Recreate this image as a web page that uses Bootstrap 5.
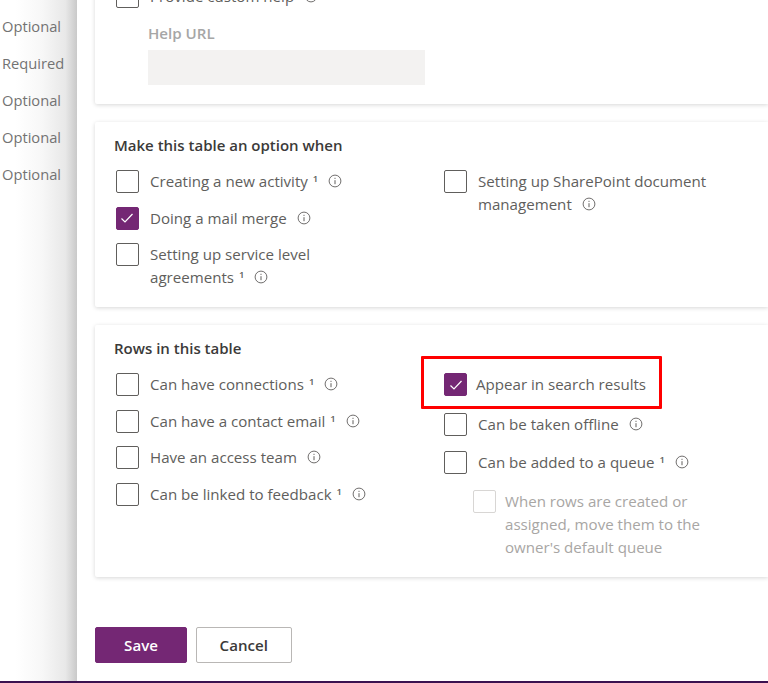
<!DOCTYPE html>
<html lang="en"><head><meta charset="utf-8"><title>Table settings</title>
<link href="https://cdn.jsdelivr.net/npm/bootstrap@5.3.0/dist/css/bootstrap.min.css" rel="stylesheet">
<style>
html,body{height:683px;overflow:hidden;background:#fff}
body{font-family:"Open Sans","Noto Sans",sans-serif;font-size:15.1px;color:#605e5c}
.shell{height:681px;overflow:hidden}
.bottom-rule{height:2px;background:#3b1150}
.side-pane{width:77px;flex:none;padding:7.5px 0 0 2px;font-size:14.7px;background:linear-gradient(90deg,#fff 0,#fff 20%,#f7f7f7 55%,#e8e8e8 85%,#c9c9c9 100%)}
.side-pane div{height:37px;line-height:37px;color:#737373}
.main-pane{flex:1;min-width:0;padding-left:18px;background:#fff}
.sheet{background:#fff;border-radius:2px 0 0 2px;box-shadow:0 1px 4px rgba(0,0,0,.16);margin-bottom:18px;padding:0 0 0 20px}
.sheet-a{height:120px;margin-top:-16px;padding-top:1px}
.sheet-b{height:185px;padding-top:13px}
.sheet-c{height:252px;padding-top:13px}
.sheet-title{font-size:15px;font-weight:600;color:#3b3a39;line-height:20px;margin:0 0 15px -1px}
.col-l{width:329px;flex:none}
.col-l .opt>span:last-child{max-width:210px}
.opt{display:flex;align-items:flex-start;margin-bottom:13.6px;line-height:23px}
.box{width:23px;height:23px;flex:none;border:1px solid #605e5c;border-radius:2px;margin-left:.5px;margin-right:11.5px;background:#fff}
.box.on{background:#742774;border-color:#742774;display:flex;align-items:center;justify-content:center}
.box.off{border-color:#d8d6d4;margin-right:9px;margin-left:0}
.box svg{display:block}
.col-r .box{margin-left:0;margin-right:11px}
.col-r .box.on{margin-right:9px}
.col-r .box.off{margin-right:9px}
.col-r .sub-opt>span:last-child{max-width:205px}
.sup{font-size:9.5px;line-height:0;position:relative;top:-5px;margin-left:5px;font-weight:600}
.inf{display:inline-block;vertical-align:-1px;margin-left:10px}
.dim{color:#a8a6a4}
.sub-opt{margin-left:29px}
.gap-a{margin-bottom:17px}
.gap-b{margin-bottom:15px}
.gap-c{margin-bottom:16px}
.url-label{margin:15px 0 7px 33px;font-weight:600;color:#a6a6a6;line-height:20px}
.url-field{width:277px;height:35px;margin-left:33px;background:#f3f2f1}
.actions{margin-top:50px}
.btn-save{width:92px;height:36px;background:#742774;border:1px solid #742774;color:#fff;font-weight:600;font-size:15.1px;border-radius:2px;padding:0;line-height:33px}
.btn-save:hover{background:#742774;color:#fff}
.btn-cancel{width:96.5px;height:36px;background:#fff;border:1px solid #b9b7b5;color:#3b3a39;font-weight:600;font-size:15.1px;border-radius:2px;padding:0;margin-left:8.5px;line-height:33px}
.callout{position:absolute;left:-23.3px;top:-17.3px;width:241px;height:53px;border:3.5px solid #f00;border-radius:1px;pointer-events:none}
.callout-host{position:relative}
</style></head>
<body>
<div class="shell d-flex">
 <div class="side-pane"><div>Optional</div><div>Required</div><div>Optional</div><div>Optional</div><div>Optional</div></div>
 <div class="main-pane">
  <div class="sheet sheet-a">
   <div class="opt mb-0"><span class="box"></span><span>Provide custom help<svg class="inf" width="14" height="14" viewBox="0 0 14 14"><use href="#i"/></svg></span></div>
   <div class="url-label">Help URL</div>
   <div class="url-field"></div>
  </div>
  <div class="sheet sheet-b">
   <div class="sheet-title">Make this table an option when</div>
   <div class="d-flex">
    <div class="col-l">
     <div class="opt"><span class="box"></span><span>Creating a new activity<span class="sup">1</span><svg class="inf" width="14" height="14" viewBox="0 0 14 14"><use href="#i"/></svg></span></div>
     <div class="opt"><span class="box on"><svg width="14" height="14" viewBox="0 0 14 14"><path d="M1.5 7.5 5 11l7.5-8" fill="none" stroke="#fff" stroke-width="1.2"/></svg></span><span>Doing a mail merge<svg class="inf" width="14" height="14" viewBox="0 0 14 14"><use href="#i"/></svg></span></div>
     <div class="opt"><span class="box"></span><span>Setting up service level agreements<span class="sup">1</span><svg class="inf" width="14" height="14" viewBox="0 0 14 14"><use href="#i"/></svg></span></div>
    </div>
    <div class="col-r">
     <div class="opt"><span class="box"></span><span>Setting up SharePoint document management<svg class="inf" width="14" height="14" viewBox="0 0 14 14"><use href="#i"/></svg></span></div>
    </div>
   </div>
  </div>
  <div class="sheet sheet-c">
   <div class="sheet-title">Rows in this table</div>
   <div class="d-flex">
    <div class="col-l">
     <div class="opt"><span class="box"></span><span class="text-nowrap">Can have connections<span class="sup">1</span><svg class="inf" width="14" height="14" viewBox="0 0 14 14"><use href="#i"/></svg></span></div>
     <div class="opt"><span class="box"></span><span class="text-nowrap">Can have a contact email<span class="sup">1</span><svg class="inf" width="14" height="14" viewBox="0 0 14 14"><use href="#i"/></svg></span></div>
     <div class="opt"><span class="box"></span><span class="text-nowrap">Have an access team<svg class="inf" width="14" height="14" viewBox="0 0 14 14"><use href="#i"/></svg></span></div>
     <div class="opt"><span class="box"></span><span class="text-nowrap">Can be linked to feedback<span class="sup">1</span><svg class="inf" width="14" height="14" viewBox="0 0 14 14"><use href="#i"/></svg></span></div>
    </div>
    <div class="col-r">
     <div class="opt callout-host gap-a"><span class="callout"></span><span class="box on"><svg width="14" height="14" viewBox="0 0 14 14"><path d="M1.5 7.5 5 11l7.5-8" fill="none" stroke="#fff" stroke-width="1.2"/></svg></span><span>Appear in search results</span></div>
     <div class="opt gap-b"><span class="box"></span><span>Can be taken offline<svg class="inf" width="14" height="14" viewBox="0 0 14 14"><use href="#i"/></svg></span></div>
     <div class="opt gap-c"><span class="box"></span><span>Can be added to a queue<span class="sup">1</span><svg class="inf" width="14" height="14" viewBox="0 0 14 14"><use href="#i"/></svg></span></div>
     <div class="opt sub-opt dim"><span class="box off"></span><span>When rows are created or assigned, move them to the owner's default queue</span></div>
    </div>
   </div>
  </div>
  <div class="actions d-flex">
   <button type="button" class="btn btn-save">Save</button>
   <button type="button" class="btn btn-cancel">Cancel</button>
  </div>
 </div>
</div>
<div class="bottom-rule"></div>
<svg width="0" height="0" class="d-block position-absolute"><defs><g id="i" fill="none" stroke="#605e5c"><circle cx="7" cy="7" r="5.9" stroke-width=".9"/><path d="M7 6.2v4M7 3.8v1.1" stroke-width="1"/></g></defs></svg>
</body></html>
